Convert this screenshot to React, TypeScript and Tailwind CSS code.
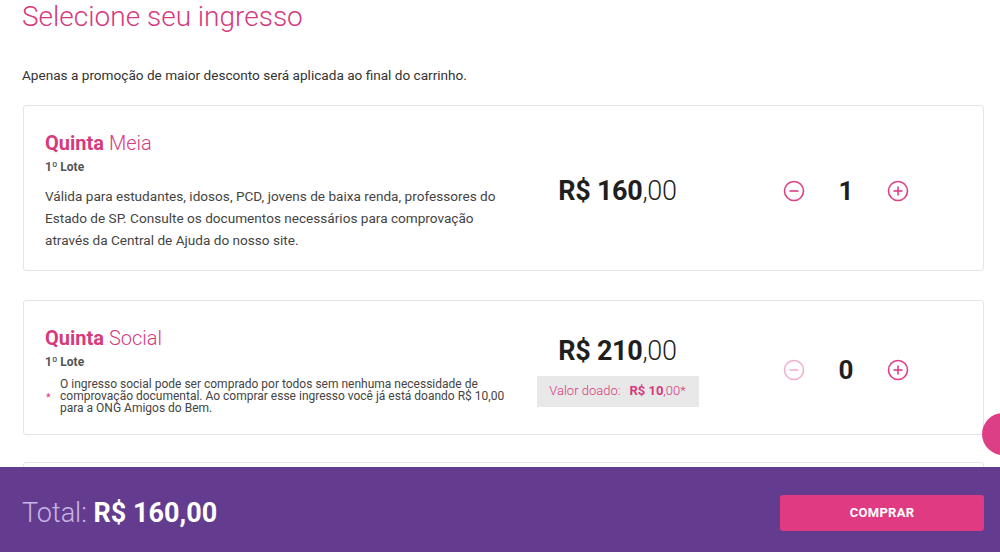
import React from "react";

const MinusIcon = ({ faded }: { faded?: boolean }) => (
  <svg width="22" height="22" viewBox="0 0 22 22" fill="none" className={faded ? "opacity-40" : ""}>
    <circle cx="11" cy="11" r="9.5" stroke="#dd3f86" strokeWidth="1.6" />
    <line x1="6.5" y1="11" x2="15.5" y2="11" stroke="#dd3f86" strokeWidth="1.6" />
  </svg>
);

const PlusIcon = () => (
  <svg width="22" height="22" viewBox="0 0 22 22" fill="none">
    <circle cx="11" cy="11" r="9.5" stroke="#dd3f86" strokeWidth="1.6" />
    <line x1="6.5" y1="11" x2="15.5" y2="11" stroke="#dd3f86" strokeWidth="1.6" />
    <line x1="11" y1="6.5" x2="11" y2="15.5" stroke="#dd3f86" strokeWidth="1.6" />
  </svg>
);

const Price = ({ main }: { main: string }) => (
  <div className="text-[27px] leading-[30px] text-[#1f1f1f] tracking-[-0.3px]">
    <span className="font-bold">R$ {main}</span>
    <span className="font-light">,00</span>
  </div>
);

const Quantity = ({ value, faded }: { value: number; faded?: boolean }) => (
  <div className="w-[250px] pl-[2px] flex items-center justify-center gap-[30px]">
    <MinusIcon faded={faded} />
    <span className="w-[22px] text-center text-[26px] font-bold text-[#1f1f1f]">{value}</span>
    <PlusIcon />
  </div>
);

const TicketTitle = ({ kind }: { kind: string }) => (
  <>
    <h3 className="text-[20px] leading-[24px] text-[#d63a7d]">
      <span className="font-bold">Quinta</span> <span className="font-light">{kind}</span>
    </h3>
    <p className="text-[12px] leading-[16px] font-bold text-[#555] mt-[4px]">1º Lote</p>
  </>
);

export default function App() {
  return (
    <div
      className="h-screen flex flex-col overflow-hidden bg-white"
      style={{ fontFamily: "Roboto, 'Liberation Sans', sans-serif" }}
    >
      {/* Content */}
      <div className="flex-1 overflow-hidden pl-[22px] pr-[16px]">
        <h1 className="text-[28px] leading-[32px] font-light text-[#d63a7d] mt-[1px]">
          Selecione seu ingresso
        </h1>
        <p className="text-[13.6px] leading-[18px] text-[#333] mt-[33px]">
          Apenas a promoção de maior desconto será aplicada ao final do carrinho.
        </p>

        {/* Card 1 */}
        <div className="mt-[21px] ml-[1px] border border-[#e4e4e4] rounded-[3px] flex items-center pl-[21px] pt-[25px] pb-[19px]">
          <div className="w-[470px]">
            <TicketTitle kind="Meia" />
            <p className="text-[13.6px] leading-[22px] text-[#444] mt-[10px] pr-[6px]">
              Válida para estudantes, idosos, PCD, jovens de baixa renda, professores do Estado de SP. Consulte os
              documentos necessários para comprovação através da Central de Ajuda do nosso site.
            </p>
          </div>
          <div className="w-[205px] flex flex-col items-center">
            <Price main="160" />
          </div>
          <Quantity value={1} />
        </div>

        {/* Card 2 */}
        <div className="mt-[29px] ml-[1px] border border-[#e4e4e4] rounded-[3px] flex items-center pl-[21px] pt-[25px] pb-[20px]">
          <div className="w-[470px]">
            <TicketTitle kind="Social" />
            <div className="flex items-center mt-[8px]">
              <span className="w-[15px] shrink-0 pl-[1px] text-[11px] text-[#d63a7d] pt-[4px]">*</span>
              <p className="text-[12px] leading-[12px] text-[#444] pr-[8px]">
                O ingresso social pode ser comprado por todos sem nenhuma necessidade de comprovação documental. Ao
                comprar esse ingresso você já está doando R$&nbsp;10,00 para a ONG Amigos do Bem.
              </p>
            </div>
          </div>
          <div className="w-[205px] flex flex-col items-center pt-[2px]">
            <Price main="210" />
            <div className="mt-[10px] w-[162px] h-[31px] bg-[#e8e8e8] flex items-center justify-center gap-[9px] text-[13px] text-[#d63a7d]">
              <span className="font-light">Valor doado:</span>
              <span>
                <span className="font-bold">R$ 10</span>
                <span className="font-light">,00*</span>
              </span>
            </div>
          </div>
          <Quantity value={0} faded />
        </div>

        {/* Card 3 (cut off) */}
        <div className="mt-[27px] ml-[1px] h-[120px] border border-[#e4e4e4] rounded-[3px]" />
      </div>

      {/* Floating help button */}
      <div className="fixed right-[-24px] top-[413px] w-[42px] h-[42px] rounded-full bg-[#dd3f86]" />

      {/* Footer */}
      <div className="h-[85px] shrink-0 bg-[#633c90] flex items-center justify-between pl-[22px] pr-[16px] pt-[7px]">
        <div className="text-[27px] leading-[32px]">
          <span className="font-light text-[#c9b6e4]">Total:</span>{" "}
          <span className="font-bold text-white">R$ 160,00</span>
        </div>
        <button className="w-[204px] h-[36px] rounded-[3px] bg-[#e03a82] text-white text-[13px] font-bold tracking-[0.3px]">
          COMPRAR
        </button>
      </div>
    </div>
  );
}
